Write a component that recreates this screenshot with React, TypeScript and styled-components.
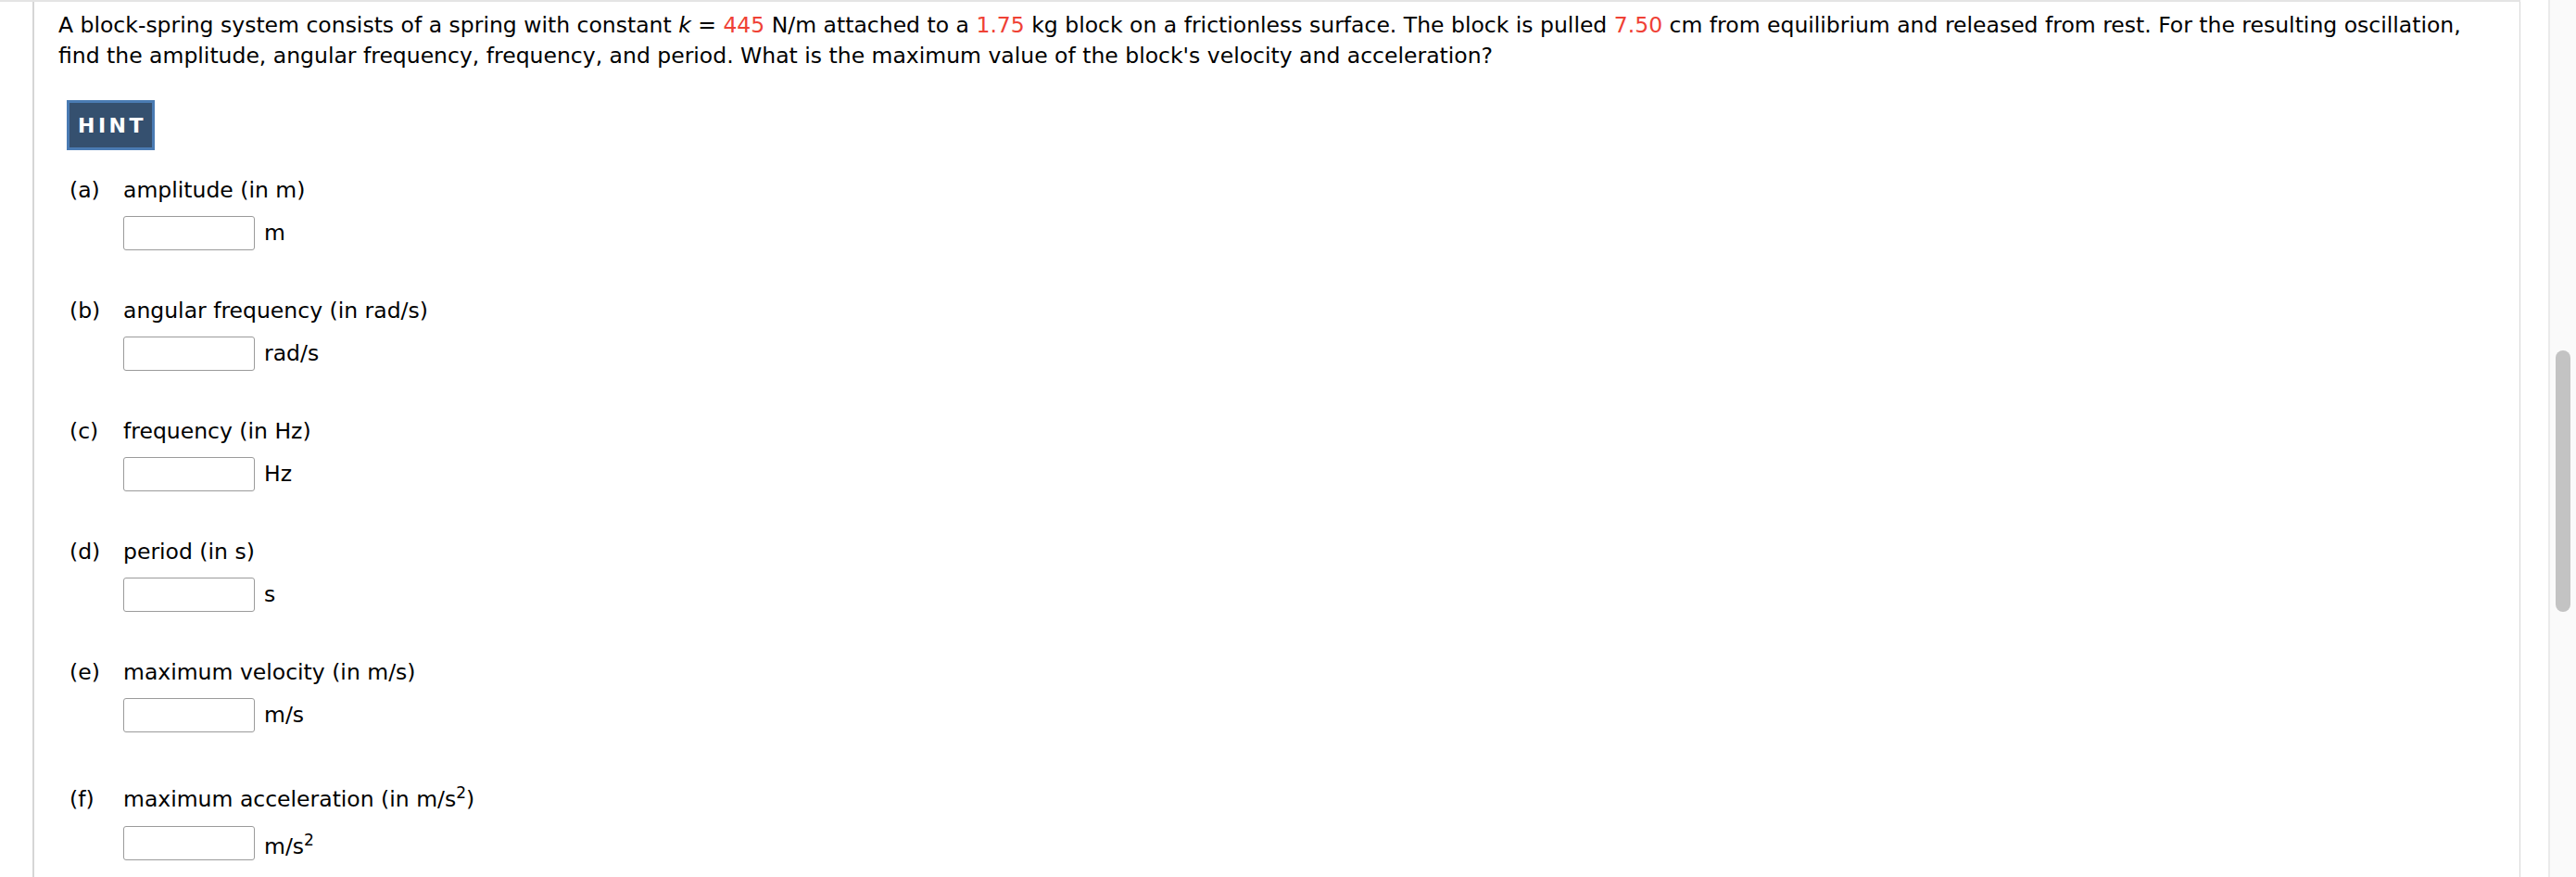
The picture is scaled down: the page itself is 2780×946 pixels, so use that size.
import React from "react";
import styled, { createGlobalStyle } from "styled-components";

const Global = createGlobalStyle`
  html, body {
    margin: 0;
    padding: 0;
    height: 946px;
    overflow: hidden;
    background: #ffffff;
  }
  body {
    font-family: Verdana, "DejaVu Sans", sans-serif;
    color: #000000;
  }
`;

const Page = styled.div`
  display: flex;
  height: 946px;
  width: 2780px;
`;

const Main = styled.div`
  width: 2720px;
  border-top: 2px solid #e4e4e4;
  box-sizing: border-box;
  display: flex;
`;

const Gutter = styled.div`
  width: 30px;
`;

const Panel = styled.div`
  margin-left: 35px;
  flex: 1;
  border-left: 2px solid #d6d6d6;
  border-right: 1px solid #d6d6d6;
  padding: 9px 40px 0 26px;
  box-sizing: border-box;
`;

const Question = styled.p`
  margin: 0;
  font-size: 23.5px;
  line-height: 33px;
`;

const Given = styled.span`
  color: #ef4135;
`;

const Var = styled.i`
  font-style: italic;
`;

const HintButton = styled.button`
  display: flex;
  align-items: center;
  justify-content: center;
  margin: 31px 0 0 9px;
  width: 95px;
  height: 54px;
  box-sizing: border-box;
  border: 3px solid #4a7bb3;
  background: #35506f;
  color: #ffffff;
  font-family: Verdana, "DejaVu Sans", sans-serif;
  font-weight: bold;
  font-size: 22px;
  letter-spacing: 3.5px;
  padding: 0 0 0 3px;
`;

const Parts = styled.div`
  margin-top: 27px;
`;

const Part = styled.div`
  padding-left: 12px;
  margin-bottom: 49px;
  font-size: 23.5px;
  line-height: 33px;
`;

const PartHeader = styled.div`
  display: flex;
  align-items: baseline;
`;

const Letter = styled.span`
  width: 58px;
  flex: none;
`;

const AnswerRow = styled.div`
  display: flex;
  align-items: center;
  gap: 10px;
  margin: 11px 0 0 58px;
`;

const Field = styled.input`
  width: 142px;
  height: 37px;
  box-sizing: border-box;
  border: 1px solid #9b9b9b;
  border-radius: 3px;
  background: #ffffff;
  padding: 0 6px;
  font-family: Verdana, "DejaVu Sans", sans-serif;
  font-size: 20px;
`;

const Unit = styled.span``;

const Sup = styled.sup`
  font-size: 17px;
  vertical-align: super;
`;

const Track = styled.div`
  width: 30px;
  height: 946px;
  box-sizing: border-box;
  border-left: 2px solid #ebebeb;
  background: #fafafa;
  padding: 378px 0 0 6px;
`;

const Thumb = styled.div`
  width: 16px;
  height: 282px;
  border-radius: 8px;
  background: #c3c3c3;
`;

type PartDef = {
  letter: string;
  label: React.ReactNode;
  unit: React.ReactNode;
};

const parts: PartDef[] = [
  { letter: "(a)", label: "amplitude (in m)", unit: "m" },
  { letter: "(b)", label: "angular frequency (in rad/s)", unit: "rad/s" },
  { letter: "(c)", label: "frequency (in Hz)", unit: "Hz" },
  { letter: "(d)", label: "period (in s)", unit: "s" },
  { letter: "(e)", label: "maximum velocity (in m/s)", unit: "m/s" },
  {
    letter: "(f)",
    label: (
      <>
        maximum acceleration (in m/s<Sup>2</Sup>)
      </>
    ),
    unit: (
      <>
        m/s<Sup>2</Sup>
      </>
    ),
  },
];

export default function App() {
  return (
    <>
      <Global />
      <Page>
        <Main>
          <Panel>
            <Question>
              A block-spring system consists of a spring with constant <Var>k</Var> ={" "}
              <Given>445</Given> N/m attached to a <Given>1.75</Given> kg block on a
              frictionless surface. The block is pulled <Given>7.50</Given> cm from
              equilibrium and released from rest. For the resulting oscillation, find the
              amplitude, angular frequency, frequency, and period. What is the maximum value
              of the block's velocity and acceleration?
            </Question>
            <HintButton type="button">HINT</HintButton>
            <Parts>
              {parts.map((p) => (
                <Part key={p.letter}>
                  <PartHeader>
                    <Letter>{p.letter}</Letter>
                    <span>{p.label}</span>
                  </PartHeader>
                  <AnswerRow>
                    <Field type="text" aria-label={p.letter} />
                    <Unit>{p.unit}</Unit>
                  </AnswerRow>
                </Part>
              ))}
            </Parts>
          </Panel>
        </Main>
        <Gutter />
        <Track>
          <Thumb />
        </Track>
      </Page>
    </>
  );
}
